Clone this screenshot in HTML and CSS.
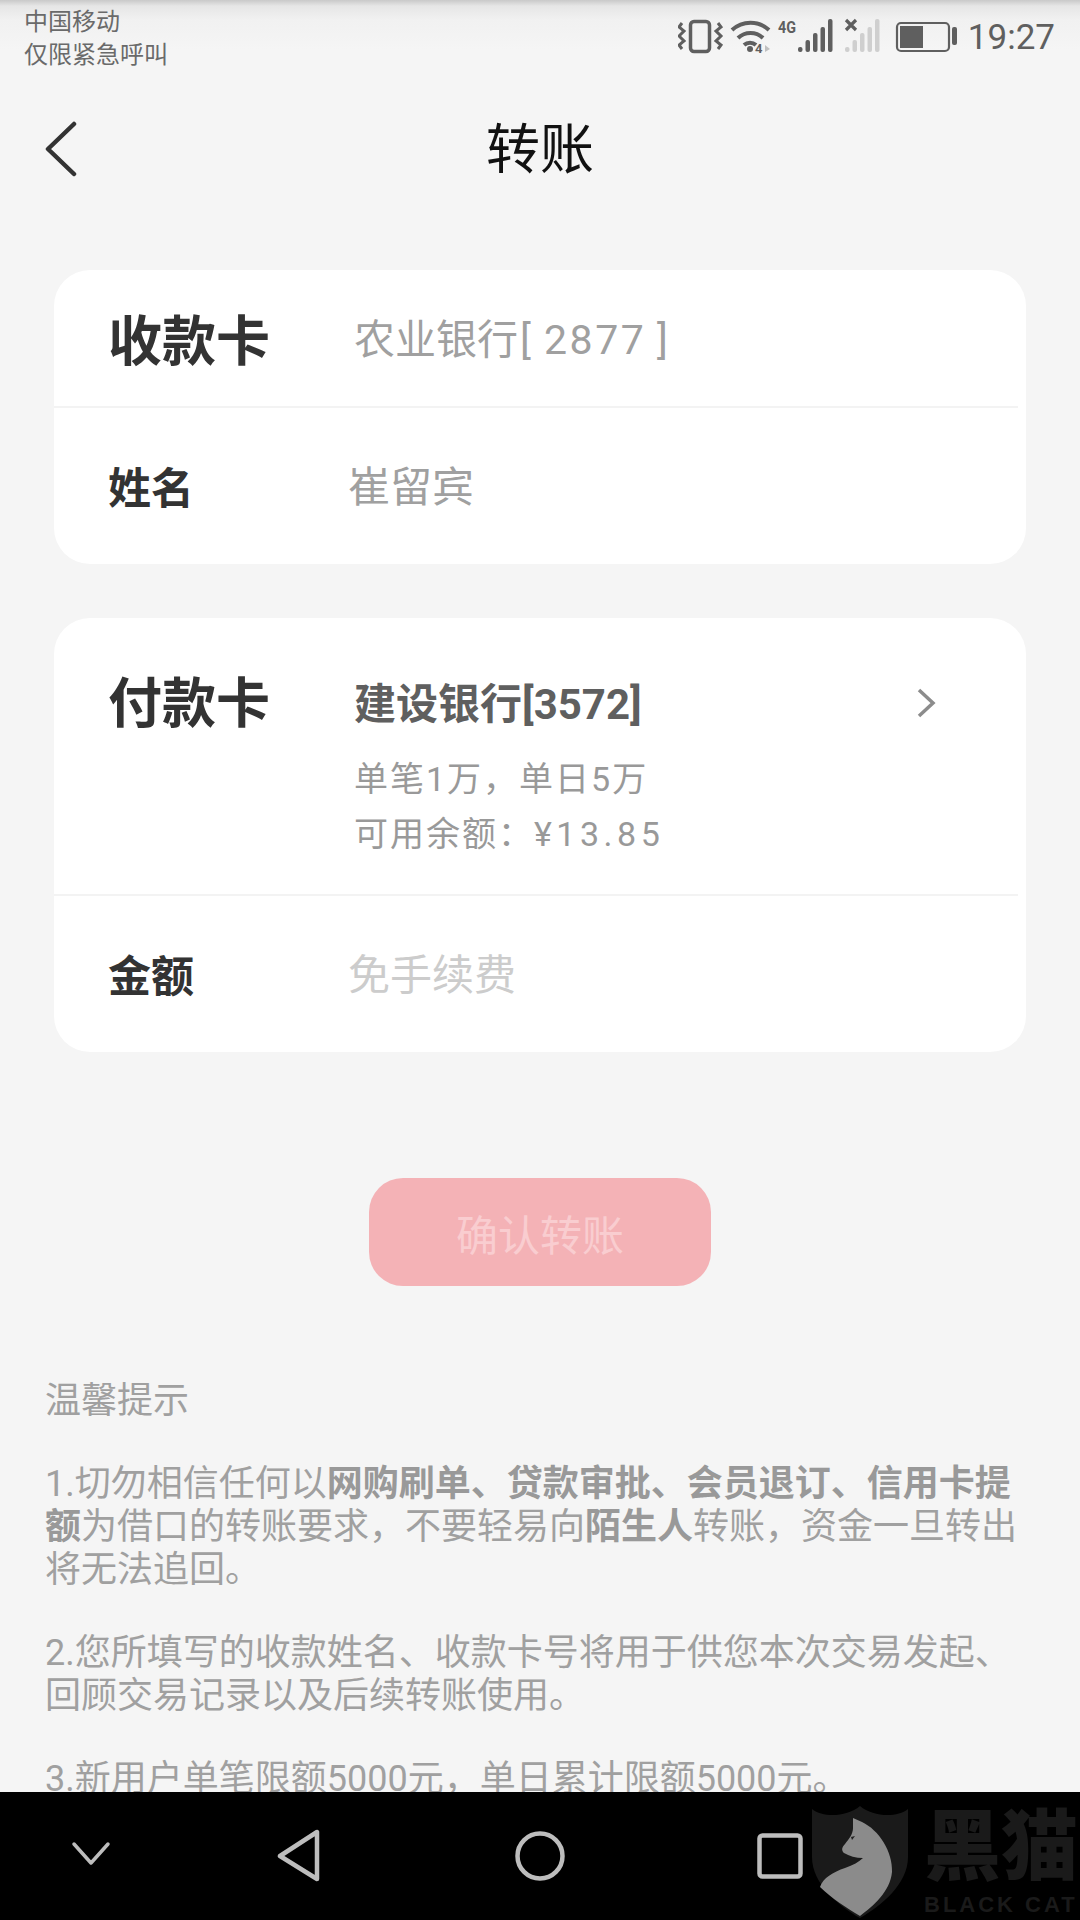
FILE: index.html
```html
<!DOCTYPE html>
<html lang="zh-CN">
<head>
    <meta charset="UTF-8">
    <title>转账</title>
    <link rel="stylesheet" href="styles.css">
</head>
<body>
<div class="screen">
    <div class="statusbar">
        <div class="carrier">
            <div>中国移动</div>
            <div>仅限紧急呼叫</div>
        </div>
        <div class="status_right">
            <svg class="status_icons" width="280" height="36" viewBox="0 0 280 36">
                <!-- vibrate -->
                <rect x="12.5" y="3.5" width="19" height="30" rx="3.5" fill="none" stroke="#5f5f5f" stroke-width="3.5"/>
                <path d="M4 5L1 9l5 4-5 5 5 5-5 4 3 4M40 5l3 4-5 4 5 5-5 5 5 4-3 4" fill="none" stroke="#5f5f5f" stroke-width="3"/>
                <!-- wifi -->
                <path d="M54 12a27 27 0 0 1 37 0M60 20a18 18 0 0 1 25 0M66 27a9 9 0 0 1 12 0" fill="none" stroke="#5f5f5f" stroke-width="4"/>
                <circle cx="72" cy="31" r="3" fill="#5f5f5f"/>
                <text class="wifi_four" x="77" y="35">4</text>
                <path d="M87 27l5 4-5 3z" fill="#c0c0c0"/>
                <!-- 4G -->
                <text class="net_type" x="100" y="15" textLength="18" lengthAdjust="spacingAndGlyphs">4G</text>
                <!-- signal 1 -->
                <rect x="120" y="29" width="4.5" height="5" rx="2" fill="#5f5f5f"/>
                <rect x="127.500" y="22" width="4.5" height="12" rx="2" fill="#5f5f5f"/>
                <rect x="135" y="15" width="4.5" height="19" rx="2" fill="#5f5f5f"/>
                <rect x="142.500" y="9" width="4.5" height="25" rx="2" fill="#5f5f5f"/>
                <rect x="150" y="1" width="4.5" height="33" rx="2" fill="#5f5f5f"/>
                <!-- signal 2 -->
                <path d="M168 2l10 10M178 2L168 12" stroke="#5f5f5f" stroke-width="3.2"/>
                <rect x="167" y="29" width="4.5" height="5" rx="2" fill="#cfcfcf"/>
                <rect x="174.500" y="22" width="4.5" height="12" rx="2" fill="#cfcfcf"/>
                <rect x="182" y="15" width="4.5" height="19" rx="2" fill="#cfcfcf"/>
                <rect x="189.500" y="9" width="4.5" height="25" rx="2" fill="#cfcfcf"/>
                <rect x="197" y="1" width="4.5" height="33" rx="2" fill="#cfcfcf"/>
                <!-- battery -->
                <rect x="219" y="5" width="52" height="28" rx="4" fill="none" stroke="#5f5f5f" stroke-width="2.2"/>
                <rect x="222" y="8" width="23" height="22" fill="#5f5f5f"/>
                <rect x="274" y="9" width="5" height="18" rx="2" fill="#5f5f5f"/>
            </svg>
            <span class="status_time">19:27</span>
        </div>
    </div>

    <div class="titlebar">
        <svg class="back" width="34" height="56" viewBox="0 0 34 56">
            <path d="M30 3L4 28l26 25" fill="none" stroke="#333" stroke-width="4.5" stroke-linecap="round" stroke-linejoin="round"/>
        </svg>
        <h1 class="title">转账</h1>
    </div>

    <div class="content">
        <div class="card">
            <div class="row row_first">
                <div class="label_big">收款卡</div>
                <div class="bank_name">农业银行<span class="bank_no">[ 2877 ]</span></div>
            </div>
            <div class="row row_name">
                <div class="label">姓名</div>
                <div class="value">崔留宾</div>
            </div>
        </div>

        <div class="card">
            <div class="row row_pay">
                <div class="label_big">付款卡</div>
                <div class="pay_info">
                    <div class="pay_bank">建设银行[3572]</div>
                    <div class="pay_sub">单笔1万，单日5万</div>
                    <div class="pay_sub">可用余额：<span class="pay_money">¥13.85</span></div>
                </div>
                <svg class="arrow" width="20" height="32" viewBox="0 0 20 32">
                    <path d="M3 3l14 13L3 29" fill="none" stroke="#8c8c8c" stroke-width="3.5"/>
                </svg>
            </div>
            <div class="row row_name">
                <div class="label">金额</div>
                <div class="value placeholder">免手续费</div>
            </div>
        </div>

        <div class="btn_wrap">
            <button class="confirm">确认转账</button>
        </div>

        <div class="tips">
            <p>温馨提示</p>
            <p>1.切勿相信任何以<b>网购刷单、贷款审批、会员退订、信用卡提额</b>为借口的转账要求，不要轻易向<b>陌生人</b>转账，资金一旦转出将无法追回。</p>
            <p>2.您所填写的收款姓名、收款卡号将用于供您本次交易发起、回顾交易记录以及后续转账使用。</p>
            <p>3.新用户单笔限额5000元，单日累计限额5000元。</p>
        </div>
    </div>

    <div class="navbar">
        <svg class="nav_icon" width="40" height="26" viewBox="0 0 40 26">
            <path d="M3 3l17 19L37 3" fill="none" stroke="#bdbdbd" stroke-width="3.5" stroke-linecap="round" stroke-linejoin="round"/>
        </svg>
        <svg class="nav_icon" width="46" height="54" viewBox="0 0 46 54">
            <path d="M41 3v47L4 27z" fill="none" stroke="#bdbdbd" stroke-width="4.5" stroke-linejoin="round"/>
        </svg>
        <svg class="nav_icon" width="50" height="50" viewBox="0 0 50 50">
            <circle cx="25" cy="25" r="22.5" fill="none" stroke="#bdbdbd" stroke-width="4.5"/>
        </svg>
        <svg class="nav_icon" width="46" height="46" viewBox="0 0 46 46">
            <rect x="2.5" y="2.5" width="41" height="41" rx="3" fill="none" stroke="#bdbdbd" stroke-width="4.5"/>
        </svg>

        <div class="watermark">
            <svg class="wm_shield" width="98" height="112" viewBox="0 0 98 112">
                <path d="M1 3C12 12 36 11 49 0c13 11 37 12 48 3v48C97 78 70 100 49 112 28 100 1 78 1 51z" fill="#1a1a1a"/>
                <path d="M42 12l9 4C68 24 82 46 81 66 79 86 62 100 49 110 36 102 20 92 9 81 12 72 22 66 34 62 42 59 48 56 52 52 45 52 38 50 33 47 30 44 31 41 34 38 38 33 42 28 42 22z" fill="#8b8b8b"/>
                <path d="M40 31l4-1-3 4z" fill="#222"/>
            </svg>
            <div class="wm_text">
                <div class="wm_cn">黑猫</div>
                <div class="wm_en">BLACK CAT</div>
            </div>
        </div>
    </div>
</div>
</body>
</html>
```

FILE: styles.css
```css
*{margin:0; padding:0; box-sizing:border-box;}
html,body{width:1080px; height:1920px; overflow:hidden;}
body{font-family:"Roboto","Noto Sans CJK SC",sans-serif; background:#f5f5f5;}

.screen{display:flex; flex-direction:column; width:1080px; height:1920px; position:relative;}

/* status bar */
.statusbar{
    display:flex; justify-content:space-between;
    height:72px; padding:6px 25px 0 24px;
    background:linear-gradient(#c9c9c9 0,#e6e6e6 6px,#f1f1f1 20px,#f5f5f5 50px);
}
.carrier{font-size:24px; line-height:33px; color:#6a6a6a;}
.status_right{display:flex; align-items:flex-start; gap:10px; padding-top:12px;}
.status_icons{display:block;}
.status_time{font-size:35px; line-height:40px; color:#5f5f5f;}
.wifi_four{font-size:13px; font-weight:700; fill:#5f5f5f;}
.net_type{font-size:17px; font-weight:700; fill:#5f5f5f;}

/* title */
.titlebar{display:flex; align-items:center; justify-content:center; height:118px; padding-top:40px; position:relative;}
.back{position:absolute; left:44px; top:49px;}
.title{font-size:54px; font-weight:400; color:#111; line-height:60px;}

/* cards */
.content{flex:1; overflow:hidden; padding-top:80px;}
.card{margin:0 54px 54px 54px; background:#fff; border-radius:36px; overflow:hidden;}
.row{display:flex; padding-left:54px;}
.row_first{align-items:center; height:138px; border-bottom:2px solid #f3f3f3; margin-right:8px;}
.row_first .label_big{padding-top:9px;}
.row_name{align-items:center; height:156px; padding-bottom:3px;}
.row_pay{height:278px; padding-top:56px; border-bottom:2px solid #f3f3f3; margin-right:8px;}

.label_big{width:246px; font-size:54px; line-height:62px; font-weight:700; color:#333;}
.label{width:240px; font-size:43px; font-weight:700; color:#333;}
.bank_name{font-size:41px; color:#a0a0a0; padding-bottom:4px;}
.bank_no{letter-spacing:2.5px; word-spacing:-2px; margin-left:2px;}
.value{font-size:42px; color:#a0a0a0; padding-bottom:2px;}
.placeholder{color:#ccc;}

.pay_info{flex:1;}
.pay_bank{font-size:42px; line-height:62px; font-weight:700; color:#5f5f5f; margin-bottom:16px;}
.pay_sub{font-size:34px; line-height:55px; color:#999; letter-spacing:2px;}
.pay_money{letter-spacing:4.5px;}
.arrow{margin:13px 82px 0 0;}

/* button */
.btn_wrap{display:flex; justify-content:center; padding-top:72px;}
.confirm{
    width:342px; height:108px; border:0; border-radius:34px;
    background:#f4b2b6; color:#f9cdd0;
    font-family:inherit; font-size:42px;
}

/* tips */
.tips{padding:94px 46px 0 45px; font-size:36px; line-height:43px; color:#a0a0a0;}
.tips p{margin-bottom:40px;}
.tips b{font-weight:700; color:#999;}

/* nav */
.navbar{height:128px; flex-shrink:0; background:#000; position:relative;}
.nav_icon{position:absolute;}
.nav_icon:nth-child(1){left:71px; top:49px;}
.nav_icon:nth-child(2){left:276px; top:37px;}
.nav_icon:nth-child(3){left:515px; top:39px;}
.nav_icon:nth-child(4){left:757px; top:41px;}

.watermark{position:absolute; left:811px; top:14px; display:flex; gap:15px;}
.wm_shield{display:block;}
.wm_text{color:#1a1a1a; font-weight:700; padding-top:2px;}
.wm_cn{font-size:77px; line-height:80px; font-weight:900; white-space:nowrap;}
.wm_en{font-size:22px; line-height:26px; margin-top:4px; letter-spacing:3px; white-space:nowrap; font-family:"Liberation Sans",sans-serif;}
```
